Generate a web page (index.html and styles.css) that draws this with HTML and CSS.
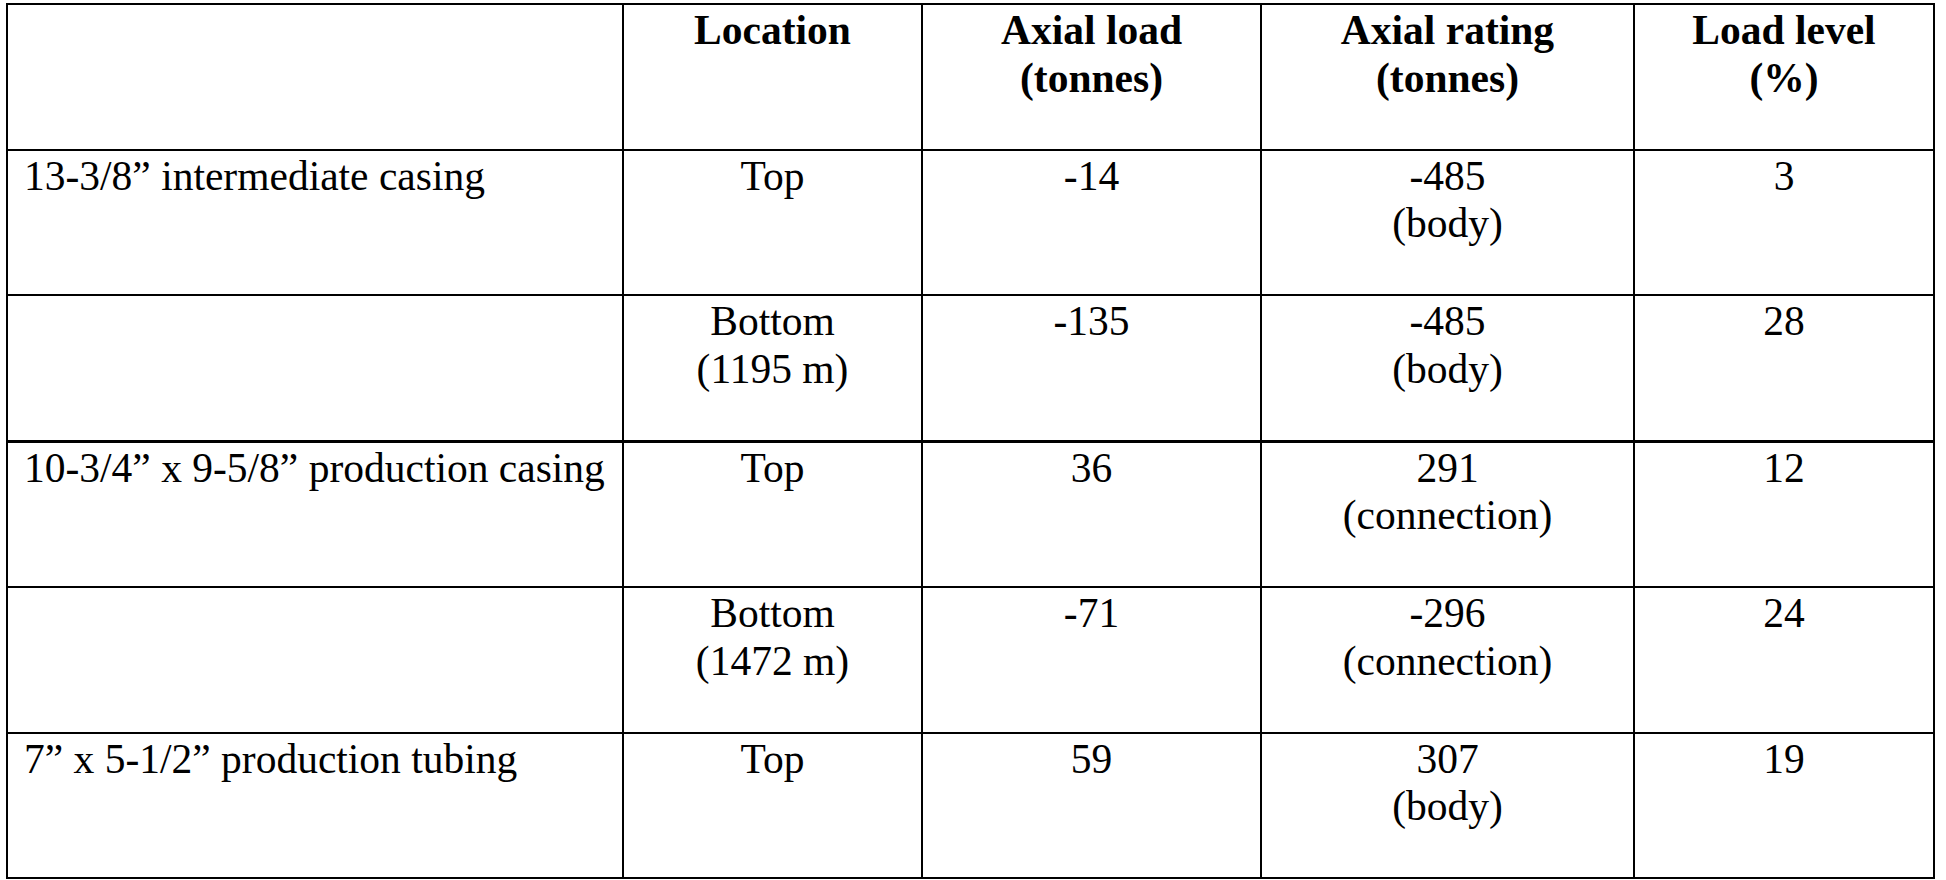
FILE: index.html
```html
<!DOCTYPE html>
<html>
<head>
<meta charset="utf-8">
<link rel="stylesheet" href="styles.css">
</head>
<body>
<table class="loads">
  <colgroup>
    <col class="c-name">
    <col class="c-loc">
    <col class="c-load">
    <col class="c-rating">
    <col class="c-level">
  </colgroup>
  <thead>
    <tr>
      <th></th>
      <th>Location</th>
      <th>Axial load<br>(tonnes)</th>
      <th>Axial rating<br>(tonnes)</th>
      <th>Load level<br>(%)</th>
    </tr>
  </thead>
  <tbody>
    <tr>
      <td class="name">13-3/8” intermediate casing</td>
      <td>Top</td>
      <td>-14</td>
      <td>-485<br>(body)</td>
      <td>3</td>
    </tr>
    <tr>
      <td class="name"></td>
      <td>Bottom<br>(1195 m)</td>
      <td>-135</td>
      <td>-485<br>(body)</td>
      <td>28</td>
    </tr>
    <tr class="thick">
      <td class="name">10-3/4” x 9-5/8” production casing</td>
      <td>Top</td>
      <td>36</td>
      <td>291<br>(connection)</td>
      <td>12</td>
    </tr>
    <tr>
      <td class="name"></td>
      <td>Bottom<br>(1472 m)</td>
      <td>-71</td>
      <td>-296<br>(connection)</td>
      <td>24</td>
    </tr>
    <tr>
      <td class="name">7” x 5-1/2” production tubing</td>
      <td>Top</td>
      <td>59</td>
      <td>307<br>(body)</td>
      <td>19</td>
    </tr>
  </tbody>
</table>
</body>
</html>
```
FILE: styles.css
```css
html, body {
  margin: 0;
  padding: 0;
  background: #ffffff;
}
body {
  padding: 3px 0 0 6px;
  font-family: "Liberation Serif", "Times New Roman", serif;
  color: #000000;
}
.loads {
  border-collapse: collapse;
  table-layout: fixed;
  width: 1929px;
  font-size: 41.5px;
  line-height: 1.15;
}
.c-name { width: 616px; }
.c-loc { width: 299px; }
.c-load { width: 339px; }
.c-rating { width: 373px; }
.c-level { width: 300px; }
.loads th,
.loads td {
  border: 2px solid #000000;
  height: 141.5px;
  padding: 2px 4px 0 4px;
  vertical-align: top;
  text-align: center;
  font-weight: normal;
  white-space: nowrap;
}
.loads th {
  font-weight: bold;
}
.loads td.name {
  text-align: left;
  padding-left: 16px;
}
.loads tr.thick td {
  border-top-width: 3px;
}
```
